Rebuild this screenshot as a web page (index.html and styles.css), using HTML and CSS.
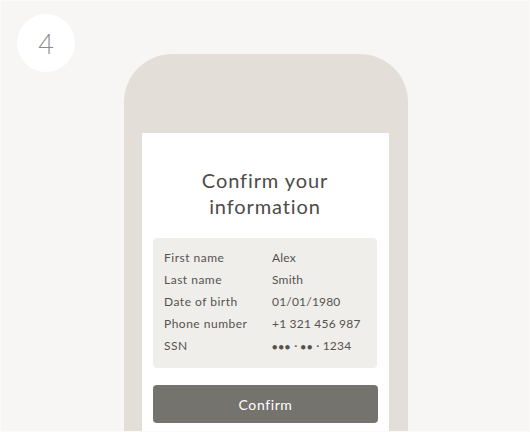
FILE: index.html
```html
<!DOCTYPE html>
<html>
<head>
<meta charset="utf-8">
<link rel="stylesheet" href="styles.css">
</head>
<body>
<div class="frame">
  <div class="step">4</div>
  <div class="phone">
    <div class="screen">
      <h1 class="title">Confirm your<br>information</h1>
      <div class="info">
        <div class="row"><span class="label">First name</span><span class="value">Alex</span></div>
        <div class="row"><span class="label">Last name</span><span class="value">Smith</span></div>
        <div class="row"><span class="label">Date of birth</span><span class="value">01/01/1980</span></div>
        <div class="row"><span class="label">Phone number</span><span class="value">+1 321 456 987</span></div>
        <div class="row"><span class="label">SSN</span><span class="value"><span class="dots">●●●</span><span class="sep">·</span><span class="dots">●●</span><span class="sep">·</span>1234</span></div>
      </div>
      <button class="confirm">Confirm</button>
    </div>
  </div>
</div>
</body>
</html>
```
FILE: styles.css
```css
* { box-sizing: border-box; }
html, body { margin: 0; padding: 0; }
body { width: 530px; height: 432px; overflow: hidden; background: #ffffff; font-family: "Lato", "Noto Sans", sans-serif; }
.frame {
  position: relative;
  width: 530px;
  height: 432px;
  background: #f7f6f4;
  border: 1px solid #fbfaf9;
  overflow: hidden;
  padding: 53px 0 0 123px;
}
.step {
  position: absolute;
  left: 16px;
  top: 13px;
  width: 58px;
  height: 58px;
  border-radius: 50%;
  background: #ffffff;
  color: #8c8b8a;
  font-size: 27px;
  font-weight: 300;
  display: flex;
  align-items: center;
  justify-content: center;
}
.phone {
  width: 284px;
  height: 420px;
  background: #e3dfd8;
  border-radius: 48px 48px 0 0;
  padding: 79px 19px 0 18px;
}
.screen {
  background: #ffffff;
  height: 100%;
  padding: 34px 12px 0 11px;
}
.title {
  margin: 0;
  text-align: center;
  font-size: 20px;
  line-height: 26px;
  font-weight: 400;
  color: #4d4b48;
  letter-spacing: 0.9px;
}
.info {
  margin-top: 19px;
  background: #efeeea;
  border-radius: 4px;
  padding: 8px 11px 12px 11px;
}
.row {
  display: flex;
  height: 22px;
  align-items: center;
  font-size: 12px;
  color: #55534f;
  letter-spacing: 0.5px;
}
.label { width: 108px; }
.value { letter-spacing: 0.2px; }
.dots { font-size: 9px; letter-spacing: 1px; }
.sep { margin: 0 3px; }
.confirm {
  display: block;
  margin-top: 17px;
  width: 225px;
  height: 38px;
  border: none;
  border-radius: 4px;
  background: #75736e;
  color: #ffffff;
  font-family: inherit;
  font-size: 14px;
  letter-spacing: 0.6px;
  padding-top: 2px;
}
```
